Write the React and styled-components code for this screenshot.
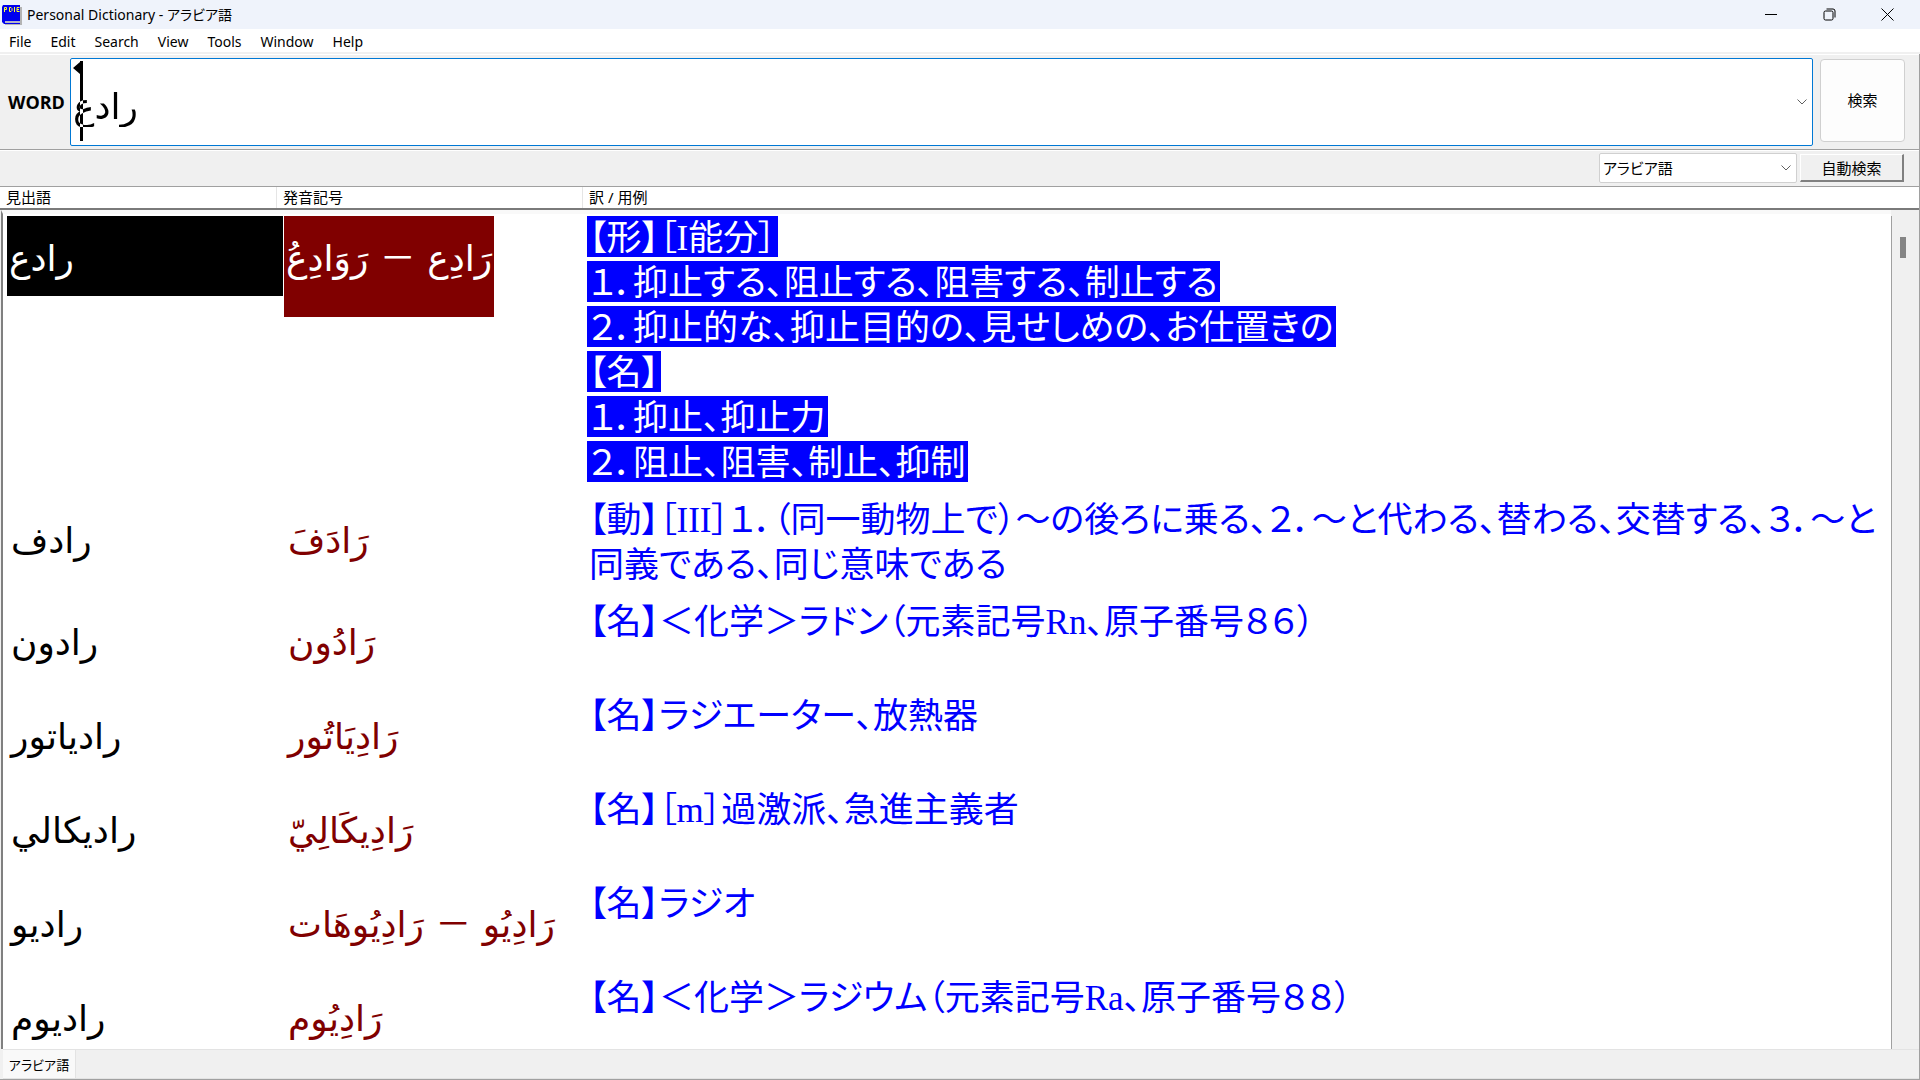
import React from "react";
import styled, { createGlobalStyle, css } from "styled-components";

const UI = `"Noto Sans", "Noto Sans CJK JP", sans-serif`;
const ARABIC = `"DejaVu Sans", "Noto Sans CJK JP", sans-serif`;

const GlobalStyle = createGlobalStyle`
  * { box-sizing: border-box; }
  body { margin: 0; background: #f0f0f0; color: #000; font: 15px/20px ${UI}; }
  button, input, select { font: inherit; color: inherit; border-radius: 0; margin: 0; }
`;

const Window = styled.div`
  display: flex;
  flex-direction: column;
  height: 100vh;
  overflow: hidden;
  border-bottom: 1px solid #a0a0a0;
`;

const TitleBar = styled.header`
  display: flex;
  align-items: center;
  height: 29px;
  padding: 0 4px 0 2px;
  background: #eff3fb;
`;

const Title = styled.h1`
  flex: 1;
  margin: 0 0 0 5px;
  font-size: 14px;
  font-weight: 400;
  font-feature-settings: "palt";
`;

const CaptionButton = styled.button`
  display: grid;
  place-items: center;
  width: 58px;
  height: 29px;
  padding: 0;
  border: 0;
  background: transparent;
`;

const MenuBar = styled.nav`
  display: flex;
  gap: 19px;
  height: 25px;
  padding: 3px 9px 0;
  background: #fff;
  border-bottom: 2px solid #f0f0f0;
`;

const MenuItem = styled.button`
  padding: 0;
  border: 0;
  background: transparent;
  font-size: 14px;
  line-height: 20px;
`;

const Panel = styled.div`
  display: flex;
  flex: 1;
  flex-direction: column;
  min-height: 0;
  border-right: 1px solid #a0a0a0;
`;

const SearchBar = styled.form`
  display: flex;
  align-items: center;
  height: 96px;
  padding: 0 14px 0 8px;
  border-top: 1px solid #fff;
  border-bottom: 1px solid #a0a0a0;
`;

const WordLabel = styled.label`
  width: 62px;
  font-family: "Open Sans", sans-serif;
  font-size: 18px;
  font-weight: 700;
`;

const ComboBox = styled.div`
  position: relative;
  display: flex;
  flex: 1;
  align-items: center;
  height: 88px;
  padding-right: 3px;
  background: #fff;
  border: 1px solid #0078d4;
  border-radius: 2px;
  isolation: isolate;
`;

const WordInput = styled.input`
  flex: 1;
  min-width: 0;
  height: 84px;
  padding: 8px 2px 0;
  border: 0;
  outline: 0;
  background: transparent;
  font-family: ${ARABIC};
  font-size: 36px;
  text-align: left;
`;

const Caret = styled.svg`
  position: absolute;
  left: 2px;
  top: 2px;
  mix-blend-mode: difference;
`;

const DropButton = styled.button`
  width: 14px;
  padding: 0;
  border: 0;
  background: transparent;
  line-height: 0;
`;

const SearchButton = styled.button`
  width: 85px;
  height: 83px;
  margin: 0 0 4px 7px;
  padding: 0;
  background: #fdfdfd;
  border: 1px solid #d0d0d0;
  border-radius: 4px;
`;

const OptionsBar = styled.div`
  display: flex;
  align-items: center;
  justify-content: flex-end;
  gap: 3px;
  height: 37px;
  padding: 0 15px 1px 0;
  border-top: 1px solid #fff;
  border-bottom: 1px solid #a0a0a0;
`;

const SelectBox = styled.div`
  display: grid;
  align-items: center;
  width: 198px;
  height: 30px;
  background: #fff;
  border: 1px solid #d0d0d0;
  border-radius: 2px;

  > * { grid-area: 1 / 1; }
  > svg { justify-self: end; margin-right: 5px; pointer-events: none; }
`;

const LanguageSelect = styled.select`
  appearance: none;
  width: 100%;
  height: 28px;
  padding: 0 3px;
  border: 0;
  background: transparent;
  font-size: 15px;
  font-feature-settings: "palt";
`;

const AutoButton = styled.button`
  width: 104px;
  height: 28px;
  padding: 0;
  background: #f0f0f0;
  border: solid;
  border-width: 1px 2px 2px 1px;
  border-color: #fff #808080 #808080 #fff;
`;

const ListView = styled.div`
  display: grid;
  flex: 1;
  grid-template-columns: minmax(0, 1fr) 28px;
  grid-template-rows: auto minmax(0, 1fr);
  min-height: 0;
`;

const Table = styled.table`
  display: contents;
`;

const Head = styled.thead`
  grid-column: 1 / 3;
  display: block;
  background: #fff;
  border-bottom: 2px solid #7a7a7a;
`;

const HeadRow = styled.tr`
  display: grid;
  grid-template-columns: 277px 306px minmax(0, 1fr);
  height: 21px;
`;

const HeadCell = styled.th`
  padding: 0 0 0 6px;
  border-right: 1px solid #e5e5e5;
  font-size: 15px;
  line-height: 21px;
  font-weight: 400;
  text-align: left;
  &:last-child { border-right: 0; }
`;

const Body = styled.tbody`
  display: block;
  overflow: hidden;
  margin-left: 1px;
  padding-left: 4px;
  background: #fff;
  border-top: 4px solid #f9f9f9;
  border-left: 2px solid #808080;
`;

const Row = styled.tr`
  display: grid;
  grid-template-columns: 276px 304px minmax(0, 1fr);
  min-height: 94px;
`;

const HeadwordCell = styled.td`
  display: block;
  padding: 2px 0 0;
`;

const ReadingCell = styled.td`
  display: block;
  padding: 2px 0 0 1px;
`;

const Arabic = styled.div`
  padding: 6px 4px 0;
  font-family: ${ARABIC};
  font-size: 36px;
  line-height: 74px;
  white-space: nowrap;
  color: ${(p) => p.$color};
  ${(p) => p.$selected && css`
    width: ${p.$fill ? "auto" : "fit-content"};
    padding: ${p.$fill ? "6px 2px 0" : "6px 2px 21px"};
    background: ${p.$color};
    color: #fff;
  `}
`;

const MeaningCell = styled.td`
  display: block;
  padding: 2px 8px 10px 0;
  font-family: "Liberation Serif", "Noto Sans CJK JP", serif;
  font-size: 35px;
  font-feature-settings: "palt";
  line-height: 45px;
  color: #0000ff;
`;

const Line = styled.div`
  padding: 0 2px;
  ${(p) => p.$selected && css`
    width: fit-content;
    margin-bottom: 4px;
    padding-top: 4px;
    background: #0000ff;
    color: #fff;
    line-height: 37px;
  `}
`;

const ScrollTrack = styled.div`
  display: flex;
  justify-content: center;
  margin: 6px 6px 0 0;
  padding-top: 21px;
  border-left: 1px solid #a0a0a0;
`;

const ScrollThumb = styled.div`
  width: 6px;
  height: 21px;
  background: #858585;
`;

const TabBar = styled.footer`
  display: flex;
  height: 30px;
  margin-left: 3px;
  border-top: 1px solid #e3e3e3;
  border-bottom: 1px solid #e3e3e3;
`;

const Tab = styled.button`
  width: 73px;
  padding: 2px 0 0;
  border: 0;
  border-right: 1px solid #e3e3e3;
  background: #f9f9f9;
  font-size: 13px;
  font-feature-settings: "palt";
`;

const Chevron = () => (
  <svg width="10" height="6" viewBox="0 0 10 6" fill="none" stroke="#606060">
    <path d="M.5 .5 5 5 9.5 .5" />
  </svg>
);

const AppIcon = () => (
  <svg width="20" height="20" viewBox="0 0 20 20" aria-hidden="true">
    <path d="M3 2h17v18H3z" fill="#b4b4b4" />
    <path d="M1 0h17v19H2L0 17V2z" fill="#0000f0" />
    <path d="M3 16h15v2H3z" fill="#b4b4c8" />
    <path
      d="M2.5 7V2.500h2v2h-2M7.500 2.500V6.500h1.500l1-1v-2l-1-1zM12.500 2v5M17.500 2.500H15v4h2.500M15 4.500h2"
      fill="none"
      stroke="#ffff30"
    />
  </svg>
);

const MENUS = ["File", "Edit", "Search", "View", "Tools", "Window", "Help"];

const ENTRIES = [
  {
    word: "رادع",
    reading: "رَادِع － رَوَادِعُ",
    selected: true,
    lines: [
      "【形】［I能分］",
      "１．抑止する、阻止する、阻害する、制止する",
      "２．抑止的な、抑止目的の、見せしめの、お仕置きの",
      "【名】",
      "１．抑止、抑止力",
      "２．阻止、阻害、制止、抑制",
    ],
  },
  {
    word: "رادف",
    reading: "رَادَفَ",
    lines: ["【動】［III］１．（同一動物上で）～の後ろに乗る、２．～と代わる、替わる、交替する、３．～と同義である、同じ意味である"],
  },
  { word: "رادون", reading: "رَادُون", lines: ["【名】＜化学＞ラドン（元素記号Rn、原子番号８６）"] },
  { word: "رادياتور", reading: "رَادِيَاتُور", lines: ["【名】ラジエーター、放熱器"] },
  { word: "راديكالي", reading: "رَادِيكَالِيّ", lines: ["【名】［m］過激派、急進主義者"] },
  { word: "راديو", reading: "رَادِيُو － رَادِيُوهَات", lines: ["【名】ラジオ"] },
  { word: "راديوم", reading: "رَادِيُوم", lines: ["【名】＜化学＞ラジウム（元素記号Ra、原子番号８８）"] },
];

export default function App() {
  return (
    <Window>
      <GlobalStyle />
      <TitleBar>
        <AppIcon />
        <Title>Personal Dictionary - アラビア語</Title>
        <CaptionButton aria-label="Minimize">
          <svg width="12" height="12" stroke="#000"><path d="M0 5.500h12" /></svg>
        </CaptionButton>
        <CaptionButton aria-label="Restore">
          <svg width="13" height="13" fill="none" stroke="#000">
            <rect x="1" y="3" width="9" height="9" rx="1.500" />
            <path d="M3.500 1h6.500a2 2 0 0 1 2 2v6.500" />
          </svg>
        </CaptionButton>
        <CaptionButton aria-label="Close">
          <svg width="13" height="13" stroke="#000"><path d="M.5 .5l12 12M12.500 .5l-12 12" /></svg>
        </CaptionButton>
      </TitleBar>
      <MenuBar>
        {MENUS.map((m) => <MenuItem key={m}>{m}</MenuItem>)}
      </MenuBar>
      <Panel>
        <SearchBar onSubmit={(e) => e.preventDefault()}>
          <WordLabel htmlFor="word">WORD</WordLabel>
          <ComboBox>
            <WordInput id="word" dir="rtl" defaultValue="رادع" />
            <Caret width="10" height="80" fill="#fff" aria-hidden="true">
              <path d="M10 0v80H7V13L0 7 7 1V0z" />
            </Caret>
            <DropButton type="button" aria-label="History"><Chevron /></DropButton>
          </ComboBox>
          <SearchButton>検索</SearchButton>
        </SearchBar>
        <OptionsBar>
          <SelectBox>
            <LanguageSelect aria-label="辞書">
              <option>アラビア語</option>
            </LanguageSelect>
            <Chevron />
          </SelectBox>
          <AutoButton>自動検索</AutoButton>
        </OptionsBar>
        <ListView>
          <Table>
            <Head>
              <HeadRow>
                <HeadCell scope="col">見出語</HeadCell>
                <HeadCell scope="col">発音記号</HeadCell>
                <HeadCell scope="col">訳 / 用例</HeadCell>
              </HeadRow>
            </Head>
            <Body>
              {ENTRIES.map((e) => (
                <Row key={e.word}>
                  <HeadwordCell>
                    <Arabic $color="#000" $selected={e.selected} $fill lang="ar">{e.word}</Arabic>
                  </HeadwordCell>
                  <ReadingCell>
                    <Arabic $color="#800000" $selected={e.selected} lang="ar">{e.reading}</Arabic>
                  </ReadingCell>
                  <MeaningCell>
                    {e.lines.map((l) => <Line key={l} $selected={e.selected}>{l}</Line>)}
                  </MeaningCell>
                </Row>
              ))}
            </Body>
          </Table>
          <ScrollTrack><ScrollThumb /></ScrollTrack>
        </ListView>
        <TabBar>
          <Tab>アラビア語</Tab>
        </TabBar>
      </Panel>
    </Window>
  );
}
